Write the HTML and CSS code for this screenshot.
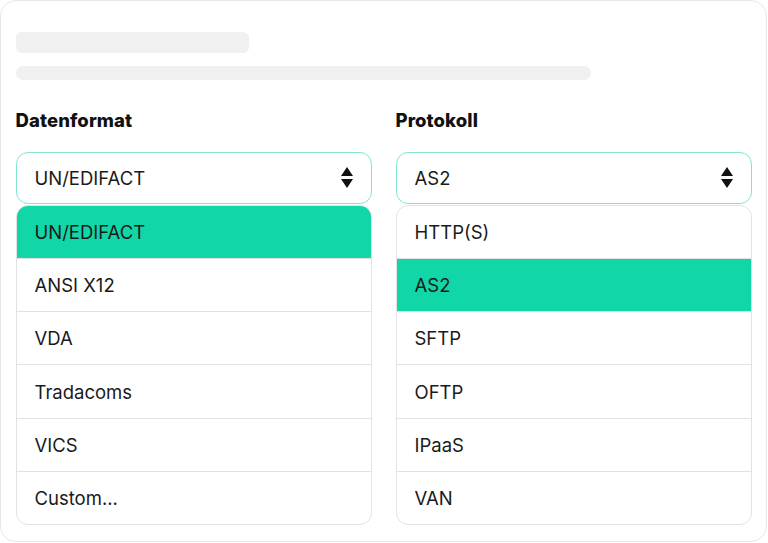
FILE: index.html
```html
<!DOCTYPE html>
<html lang="de">
<head>
<meta charset="utf-8">
<link rel="stylesheet" href="styles.css">
</head>
<body>
<div class="card">
  <div class="sk sk-title"></div>
  <div class="sk sk-line"></div>
  <div class="cols">
    <div class="col">
      <div class="label">Datenformat</div>
      <div class="select">
        <span>UN/EDIFACT</span>
        <svg class="arrows" width="12" height="22" viewBox="0 0 12 22"><path d="M6 0 L12 9 L0 9 Z M0 12 L12 12 L6 21 Z" fill="#111"/></svg>
      </div>
      <ul class="list">
        <li class="active">UN/EDIFACT</li>
        <li>ANSI X12</li>
        <li>VDA</li>
        <li>Tradacoms</li>
        <li>VICS</li>
        <li>Custom...</li>
      </ul>
    </div>
    <div class="col">
      <div class="label">Protokoll</div>
      <div class="select">
        <span>AS2</span>
        <svg class="arrows" width="12" height="22" viewBox="0 0 12 22"><path d="M6 0 L12 9 L0 9 Z M0 12 L12 12 L6 21 Z" fill="#111"/></svg>
      </div>
      <ul class="list">
        <li>HTTP(S)</li>
        <li class="active">AS2</li>
        <li>SFTP</li>
        <li>OFTP</li>
        <li>IPaaS</li>
        <li>VAN</li>
      </ul>
    </div>
  </div>
</div>
</body>
</html>
```
FILE: styles.css
```css
* { box-sizing: border-box; }
html, body { margin: 0; padding: 0; background: #fff; }
body { font-family: Inter, "Noto Sans", sans-serif; color: #1a1a1a; }
.card {
  width: 767px;
  height: 542px;
  border: 1.5px solid #e8e8e8;
  border-radius: 16px;
  padding: 30.5px 14.5px 0 14.5px;
  background: #fff;
}
.sk { background: #f0f0f0; }
.sk-title { width: 233px; height: 21px; border-radius: 6px; }
.sk-line { width: 575px; height: 14px; border-radius: 7px; margin-top: 13px; }
.cols { display: flex; gap: 24px; margin-top: 28px; }
.col { width: 356px; }
.label { font-size: 18.5px; font-weight: 800; line-height: 24px; letter-spacing: 0.1px; color: #111; }
.select {
  margin-top: 20px;
  height: 52px;
  border: 1px solid #80e6cd;
  border-radius: 12px;
  display: flex;
  align-items: center;
  justify-content: space-between;
  padding: 0 18px 0 18px;
  font-size: 18.5px;
}
.arrows { display: block; }
.list {
  list-style: none;
  margin: 1px 0 0 0;
  padding: 0;
  border: 1px solid #e2e2e2;
  border-radius: 12px;
  overflow: hidden;
}
.list li {
  height: 53.3px;
  display: flex;
  align-items: center;
  padding-left: 18px;
  font-size: 18.5px;
  border-top: 1px solid #e2e2e2;
}
.list li:first-child { height: 52.3px; border-top: none; }
.list li.active { background: #10d6a8; }
```
